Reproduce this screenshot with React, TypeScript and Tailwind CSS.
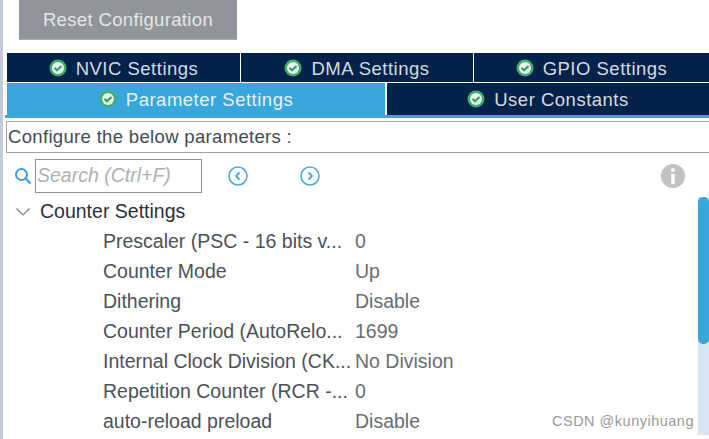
import React from "react";

const Check = () => (
  <svg width="18" height="18" viewBox="0 0 18 18" className="shrink-0">
    <circle cx="9" cy="9" r="8.5" fill="#3fae6a" />
    <circle cx="9" cy="9" r="6" fill="#e8f3ee" />
    <path d="M5.5 8.8 L8 11.3 L12.5 7" fill="none" stroke="#2f9e62" strokeWidth="2" />
  </svg>
);

const Tab = ({ label, active, className }: { label: string; active?: boolean; className: string }) => (
  <div
    className={`flex items-center justify-center gap-[9px] text-[18.5px] tracking-[0.5px] ${
      active ? "bg-[#38a7dc] text-[#e6f2fa]" : "bg-[#022249] text-[#d5dbe2]"
    } ${className}`}
  >
    <Check />
    <span className="relative top-[1px]">{label}</span>
  </div>
);

const rows = [
  ["Prescaler (PSC - 16 bits v...", "0"],
  ["Counter Mode", "Up"],
  ["Dithering", "Disable"],
  ["Counter Period (AutoRelo...", "1699"],
  ["Internal Clock Division (CK...", "No Division"],
  ["Repetition Counter (RCR -...", "0"],
  ["auto-reload preload", "Disable"],
];

export default function App() {
  return (
    <div className="relative flex h-[439px] w-[709px] overflow-hidden bg-white font-['Liberation_Sans',sans-serif]">
      <div className="w-[3px] shrink-0 bg-[#c3ccd6]" />
      <div className="flex min-w-0 flex-1 flex-col">
        <div className="ml-[16px] flex h-[40px] w-[218px] items-center justify-center border-b border-[#a9adb2] bg-[#90959b] text-[18.5px] tracking-[0.35px] text-[#e4e6e8]">
          Reset Configuration
        </div>
        <div className="ml-[4px] mt-[13px] flex h-[29px] gap-[1px]">
          <Tab label="NVIC Settings" className="w-[233px] pt-[1px]" />
          <Tab label="DMA Settings" className="w-[232px] pt-[1px]" />
          <Tab label="GPIO Settings" className="flex-1 pt-[1px]" />
        </div>
        <div className="ml-[4px] mt-[1px] flex h-[32px] gap-[2px]">
          <Tab label="Parameter Settings" active className="w-[378px]" />
          <Tab label="User Constants" className="flex-1" />
        </div>
        <div className="ml-[2px] h-[3px] bg-[#38a7dc]" />
        <div className="ml-[3px] mt-[3px] flex h-[32px] items-center border border-r-0 border-[#9ea2a6] pl-[1px] text-[18.5px] tracking-[0.33px] text-[#444a52]">
          Configure the below parameters :
        </div>
        <div className="flex h-[40px] items-center pt-[5px]">
          <svg width="18" height="18" viewBox="0 0 18 18" className="ml-[11px]">
            <circle cx="7.5" cy="7.5" r="5.5" fill="none" stroke="#38a0d8" strokeWidth="2" />
            <path d="M11.5 11.5 L16.5 16.5" stroke="#38a0d8" strokeWidth="2.2" />
          </svg>
          <div className="ml-[3px] flex h-[34px] w-[167px] items-center border border-[#8d9195] pl-[1px] text-[19.5px] italic text-[#aeb1b5]">
            Search (Ctrl+F)
          </div>
          <svg width="20" height="20" viewBox="0 0 20 20" className="ml-[26px]">
            <circle cx="10" cy="10" r="9" fill="none" stroke="#45a8dc" strokeWidth="1.5" />
            <path d="M11.5 6.5 L8 10 L11.5 13.5" fill="none" stroke="#45a8dc" strokeWidth="1.8" />
          </svg>
          <svg width="20" height="20" viewBox="0 0 20 20" className="ml-[52px]">
            <circle cx="10" cy="10" r="9" fill="none" stroke="#45a8dc" strokeWidth="1.5" />
            <path d="M8.5 6.5 L12 10 L8.5 13.5" fill="none" stroke="#45a8dc" strokeWidth="1.8" />
          </svg>
          <svg width="24" height="24" viewBox="0 0 24 24" className="ml-[341px]">
            <circle cx="12" cy="12" r="12" fill="#c2c2c2" />
            <circle cx="12" cy="6" r="2" fill="#fff" />
            <rect x="10.2" y="10" width="3.6" height="10" fill="#fff" />
          </svg>
        </div>
        <div className="flex min-h-0 flex-1">
          <div className="min-w-0 flex-1">
            <div className="mt-[4px] flex h-[30px] items-center text-[19.5px] text-[#2c3036]">
              <svg width="16" height="10" viewBox="0 0 16 10" className="ml-[12px]">
                <path d="M1.5 1.5 L8 8 L14.5 1.5" fill="none" stroke="#7b8087" strokeWidth="1.2" />
              </svg>
              <span className="ml-[9px]">Counter Settings</span>
            </div>
            {rows.map(([k, v]) => (
              <div key={k} className="flex h-[30px] items-center text-[19.5px] text-[#4c5158]">
                <span className="ml-[100px] w-[252px] whitespace-nowrap">{k}</span>
                <span className="whitespace-nowrap text-[#696d73]">{v}</span>
              </div>
            ))}
          </div>
          <div className="mt-[4px] flex h-[238px] w-[11px] shrink-0 flex-col bg-[#d9e6f3]">
            <div className="h-[147px] rounded-[5px] bg-[#38a7dc]" />
          </div>
        </div>
      </div>
      <div className="absolute bottom-[6px] right-[15px] text-[14.5px] tracking-[0.5px] text-[#9a9a9a]">
        CSDN @kunyihuang
      </div>
    </div>
  );
}
